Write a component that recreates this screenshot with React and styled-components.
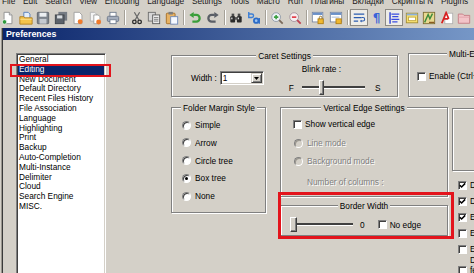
import React from "react";
import styled, { createGlobalStyle, css } from "styled-components";

//* Data *//
const menus = ["File", "Edit", "Search", "View", "Encoding", "Language", "Settings", "Tools", "Macro", "Run", "Плагины", "Вкладки", "Скрипты N", "Plugins"];

const pages = ["General", "Editing", "New Document", "Default Directory", "Recent Files History", "File Association", "Language", "Highlighting", "Print", "Backup", "Auto-Completion", "Multi-Instance", "Delimiter", "Cloud", "Search Engine", "MISC."];

const folderStyles = [
  { label: "Simple" },
  { label: "Arrow" },
  { label: "Circle tree" },
  { label: "Box tree", on: true },
  { label: "None" },
];

const sideChecks = [
  { label: "Display line number", on: true },
  { label: "Display bookmark", on: true },
  { label: "Enable current line highlighting", on: true },
  { label: "Enable smooth font" },
  { label: "Enable scrolling beyond last line" },
  { label: "Disable advanced scrolling feature (if you have touchpad problem)", tall: true },
];

//* Icons *//
const Svg = ({ children }) => (
  <svg width="14" height="14" viewBox="0 0 16 16">{children}</svg>
);

const icons = {
  new: (
    <Svg>
      <path d="M3.5 1.5h6l3 3v10h-9z" fill="#fff" stroke="#8c8c8c" />
      <path d="M9.5 1.5v3h3" fill="#e6e6e6" stroke="#8c8c8c" />
      <circle cx="4" cy="12.5" r="2.6" fill="#2f9a3c" stroke="#fff" strokeWidth=".8" />
    </Svg>
  ),
  open: (
    <Svg>
      <path d="M5.5 1.5h5l2 2v5h-7z" fill="#e4eefa" stroke="#4f79b8" />
      <path d="M1 6.5h4.5l1 1.3H15V15H1z" fill="#f3c34a" stroke="#b07e1e" />
      <path d="M1.5 9.5h13" stroke="#fbe08e" />
    </Svg>
  ),
  save: (
    <Svg>
      <rect x="1.5" y="1.5" width="13" height="13" rx="1" fill="#7c838c" stroke="#5a6068" />
      <rect x="4" y="2" width="8" height="4.5" fill="#eceff2" />
      <rect x="4" y="9" width="8" height="5.5" fill="#c4c9d0" />
    </Svg>
  ),
  saveAll: (
    <Svg>
      <rect x="5" y="1" width="10" height="10" fill="#767c84" />
      <rect x="1.5" y="4.5" width="10" height="10" fill="#5c626a" stroke="#3e4348" />
      <rect x="3.5" y="5" width="6" height="3.5" fill="#d8dce0" />
    </Svg>
  ),
  close: (
    <Svg>
      <path d="M3.5 1.5h6l3 3v10h-9z" fill="#fff" stroke="#9c9c9c" />
      <circle cx="10.5" cy="12.2" r="2.8" fill="#f07a2a" />
    </Svg>
  ),
  closeAll: (
    <Svg>
      <path d="M1.5 1.5h5l2 2v8h-7z" fill="#f4f4f4" stroke="#b0b0b0" />
      <path d="M5.5 4.5h5l2 2v8h-7z" fill="#fff" stroke="#9c9c9c" />
      <circle cx="11" cy="12.5" r="2.8" fill="#f07a2a" />
    </Svg>
  ),
  print: (
    <Svg>
      <rect x="4.5" y="1.5" width="7" height="5" fill="#fff" stroke="#6e7a8c" />
      <rect x="1.5" y="6" width="13" height="6" rx="1.5" fill="#a4adbc" stroke="#6a7688" />
      <rect x="4.5" y="10" width="7" height="4.5" fill="#fff" stroke="#6e7a8c" />
    </Svg>
  ),
  cut: (
    <Svg>
      <path d="M5 1.5l5 8.5M11 1.5L6 10" stroke="#666" strokeWidth="1.4" />
      <circle cx="5" cy="12.5" r="2" fill="none" stroke="#2c2c2c" strokeWidth="1.5" />
      <circle cx="11" cy="12.5" r="2" fill="none" stroke="#2c2c2c" strokeWidth="1.5" />
    </Svg>
  ),
  copy: (
    <Svg>
      <rect x="1.5" y="1.5" width="8" height="10" fill="#d6d6d6" stroke="#6a6a6a" />
      <rect x="6.5" y="4.5" width="8" height="10" fill="#ececec" stroke="#555" />
      <path d="M8 7.5h5M8 9.5h5M8 11.5h5" stroke="#777" />
    </Svg>
  ),
  paste: (
    <Svg>
      <rect x="1.5" y="2.5" width="10" height="12" rx="1" fill="#e7b264" stroke="#a46c22" />
      <rect x="4" y="1" width="5" height="3" fill="#7d7d7d" />
      <rect x="6.5" y="6.5" width="8" height="8.5" fill="#f4f8ff" stroke="#6a86b8" />
    </Svg>
  ),
  undo: (
    <Svg>
      <path d="M6 4.5h3.5a3.8 3.8 0 0 1 0 7.6H5" fill="none" stroke="#3a9e3a" strokeWidth="2.6" />
      <path d="M1.5 4.5L6.5 1v7z" fill="#3a9e3a" />
    </Svg>
  ),
  redo: (
    <Svg>
      <path d="M10 4.5H6.5a3.8 3.8 0 0 0 0 7.6H11" fill="none" stroke="#5a5e66" strokeWidth="2.6" />
      <path d="M14.5 4.5L9.5 1v7z" fill="#5a5e66" />
    </Svg>
  ),
  find: (
    <Svg>
      <rect x="3" y="3" width="3" height="4" fill="#4a4a4a" />
      <rect x="10" y="3" width="3" height="4" fill="#4a4a4a" />
      <rect x="1.5" y="6" width="5.5" height="7" rx="1" fill="#2a2a2a" />
      <rect x="9" y="6" width="5.5" height="7" rx="1" fill="#2a2a2a" />
      <rect x="6.5" y="7" width="3" height="3" fill="#555" />
      <rect x="2.5" y="7.5" width="1.5" height="2" fill="#ddd" />
      <rect x="10" y="7.5" width="1.5" height="2" fill="#ddd" />
    </Svg>
  ),
  replace: (
    <Svg>
      <path d="M2 1v6.5h3.5a2 2 0 0 0 0-4H2" fill="none" stroke="#3c7fd6" strokeWidth="1.6" />
      <circle cx="10.5" cy="11" r="3.6" fill="#2c6cc8" />
      <circle cx="10.5" cy="11" r="1.5" fill="#9cc4f2" />
      <path d="M14 8v6.5" stroke="#2c6cc8" strokeWidth="1.6" />
    </Svg>
  ),
  zoomIn: (
    <Svg>
      <circle cx="7" cy="7" r="5" fill="#eef2f6" stroke="#8a96a4" />
      <path d="M7 4.5v5M4.5 7h5" stroke="#3aa040" strokeWidth="1.8" />
      <path d="M10.5 10.5l4 4" stroke="#7a6a5a" strokeWidth="2" />
    </Svg>
  ),
  zoomOut: (
    <Svg>
      <circle cx="7" cy="7" r="5" fill="#f6eef0" stroke="#a0909a" />
      <path d="M4.5 7h5" stroke="#e0303c" strokeWidth="1.8" />
      <path d="M10.5 10.5l4 4" stroke="#c04050" strokeWidth="2" />
    </Svg>
  ),
  syncV: (
    <Svg>
      <rect x="1.5" y="1.5" width="12" height="11" fill="#fff" stroke="#7a86a0" />
      <rect x="2" y="2" width="11" height="2.5" fill="#6a90c8" />
      <rect x="8" y="9" width="6" height="5.5" fill="#f0b830" stroke="#b07c10" />
      <path d="M9.5 9V7.5a1.5 1.5 0 0 1 3 0V9" fill="none" stroke="#8a6a20" />
    </Svg>
  ),
  syncH: (
    <Svg>
      <rect x="1.5" y="1.5" width="13" height="11" fill="#fff" stroke="#7a86a0" />
      <rect x="2" y="2" width="12" height="2.5" fill="#6a90c8" />
      <path d="M3 7h9" stroke="#9ab0d0" />
      <rect x="8" y="9" width="6" height="5.5" fill="#f0b830" stroke="#b07c10" />
    </Svg>
  ),
  wrap: (
    <Svg>
      <path d="M2 3.5h12M2 7.5h9M2 11.5h5" stroke="#2a5cb0" strokeWidth="1.5" />
      <path d="M11 7.5h1.5a2 2 0 0 1 0 4H10" fill="none" stroke="#2a5cb0" strokeWidth="1.2" />
      <path d="M9 11.5l2-1.6v3.2z" fill="#2a5cb0" />
    </Svg>
  ),
  indent: (
    <Svg>
      <path d="M3.5 1.5v13" stroke="#2d3fd0" strokeWidth="1.6" />
      <path d="M5 3.5h9M6 6.5h7M5 9.5h9M6 12.5h6" stroke="#3a4ce0" strokeWidth="1.4" />
    </Svg>
  ),
  docMap: (
    <Svg>
      <rect x="1.5" y="2.5" width="13" height="11" fill="#f8e070" stroke="#a08a30" />
      <rect x="2" y="3" width="12" height="2" fill="#8ab0e0" />
      <rect x="4" y="7" width="8" height="4" fill="#fff" stroke="#c0a840" />
    </Svg>
  ),
  funcList: (
    <Svg>
      <rect x="1.5" y="1.5" width="13" height="13" fill="#e8d890" stroke="#7a6a30" />
      <path d="M3 13L7 4l2 5 3-6" fill="none" stroke="#3a8a3a" strokeWidth="1.6" />
      <path d="M8 13h6" stroke="#8a5a20" strokeWidth="1.4" />
    </Svg>
  ),
  macro: (
    <Svg>
      <rect x="5.5" y="2.5" width="9" height="12" fill="#fff" stroke="#b0b0b0" />
      <path d="M2 14L7 2l3 7M4.5 9h5" fill="none" stroke="#d82020" strokeWidth="2" />
    </Svg>
  ),
  folder: (
    <Svg>
      <path d="M1.5 3.5h5l1.5 1.5h6.5v9h-13z" fill="#f2c4c8" stroke="#c47880" />
      <path d="M1.5 7h13" stroke="#e0a0a8" />
    </Svg>
  ),
};

const tools = ["new", "open", "save", "saveAll", "close", "closeAll", "print", "|", "cut", "copy", "paste", "|", "undo", "redo", "|", "find", "replace", "|", "zoomIn", "zoomOut", "|", "syncV", "syncH", "|", "wrap", "para", "indent", "docMap", "funcList", "macro", "folder"];
const pressed = ["wrap", "indent"];

//* Small controls *//
const CheckBox = ({ on }) => (
  <Check>
    {on && (
      <svg width="7" height="7" viewBox="0 0 7 7">
        <path d="M0.8 3.2l1.8 1.8L6.2 1.4" fill="none" stroke="#000" strokeWidth="1.5" />
      </svg>
    )}
  </Check>
);

const App = () => {
  return (
    <Shell>
      <GlobalStyle />
      <MenuBar>
        <MenuRow>
          {menus.map((m) => (
            <MenuItem key={m}>{m}</MenuItem>
          ))}
        </MenuRow>
      </MenuBar>

      <Toolbar>
        {tools.map((t, i) =>
          t === "|" ? (
            <ToolSep key={i} />
          ) : (
            <ToolButton key={t} $pressed={pressed.includes(t)}>
              {t === "para" ? <Pilcrow>¶</Pilcrow> : icons[t]}
            </ToolButton>
          )
        )}
      </Toolbar>

      <Dialog>
        <TitleBar>Preferences</TitleBar>
        <DialogBody>
          <ListBox>
            {pages.map((p) => (
              <ListItem key={p} $selected={p === "Editing"}>
                {p}
              </ListItem>
            ))}
          </ListBox>

          <Panel>
            <Row>
              <GroupBox $w={227} $h={42} $top={2}>
                <Legend $center>Caret Settings</Legend>
                <CaretBody>
                  <WidthField>
                    <span>Width :</span>
                    <Combo>
                      <ComboValue>1</ComboValue>
                      <ComboButton>
                        <svg width="5" height="3" viewBox="0 0 5 3">
                          <path d="M0 0h5L2.5 3z" fill="#000" />
                        </svg>
                      </ComboButton>
                    </Combo>
                  </WidthField>
                  <BlinkBlock>
                    <BlinkLabel>Blink rate :</BlinkLabel>
                    <SliderRow>
                      <span>F</span>
                      <Slider>
                        <Thumb $pos={17} />
                      </Slider>
                      <span>S</span>
                    </SliderRow>
                  </BlinkBlock>
                </CaretBody>
              </GroupBox>

              <GroupBox $w={110} $h={44} $gap={10}>
                <Legend $indent={38}>Multi-Editing Settings</Legend>
                <OptionRow $top={12} $left={8}>
                  <CheckBox />
                  <span>Enable (Ctrl+Mouse click/selection)</span>
                </OptionRow>
              </GroupBox>
            </Row>

            <Row $top={10}>
              <GroupBox $w={95} $h={106}>
                <Legend $indent={9}>Folder Margin Style</Legend>
                <RadioList>
                  {folderStyles.map((s) => (
                    <OptionRow key={s.label} $left={0}>
                      <Radio $on={s.on} />
                      <span>{s.label}</span>
                    </OptionRow>
                  ))}
                </RadioList>
              </GroupBox>

              <EdgeColumn>
                <GroupBox $w={168} $h={90}>
                  <Legend $center>Vertical Edge Settings</Legend>
                  <EdgeBody>
                    <OptionRow $top={6}>
                      <CheckBox />
                      <span>Show vertical edge</span>
                    </OptionRow>
                    <OptionRow $top={9} $left={1}>
                      <Radio $disabled />
                      <Muted>Line mode</Muted>
                    </OptionRow>
                    <OptionRow $top={8} $left={1}>
                      <Radio $disabled />
                      <Muted>Background mode</Muted>
                    </OptionRow>
                    <OptionRow $top={11} $left={14}>
                      <Muted>Number of columns :</Muted>
                    </OptionRow>
                  </EdgeBody>
                </GroupBox>

                <GroupBox $w={168} $h={31}>
                  <Legend $center>Border Width</Legend>
                  <BorderRow>
                    <Slider>
                      <Thumb $pos={0} $wide />
                    </Slider>
                    <ValueText>0</ValueText>
                    <OptionRow $left={0}>
                      <CheckBox />
                      <span>No edge</span>
                    </OptionRow>
                  </BorderRow>
                </GroupBox>
              </EdgeColumn>

              <SideColumn>
                <GroupBox $w={100} $h={63} $top={1} />
                <SideChecks>
                  {sideChecks.map((c) => (
                    <SideRow key={c.label} $tall={c.tall}>
                      <CheckBox on={c.on} />
                      <span>{c.label}</span>
                    </SideRow>
                  ))}
                </SideChecks>
              </SideColumn>
            </Row>
          </Panel>

          <Annotation $x={7} $y={24} $w={101} $h={13} $b={2} />
          <Annotation $x={275} $y={152} $w={176} $h={47} $b={3} />
        </DialogBody>
      </Dialog>
    </Shell>
  );
};

export default App;

//* Styled Components *//

const GlobalStyle = createGlobalStyle`
  html, body {
    margin: 0;
    padding: 0;
    background: #d4d0c8;
    overflow: hidden;
  }
  body {
    font-family: "Liberation Sans", Arial, sans-serif;
    font-size: 8.3px;
    color: #000;
  }
`;

const Shell = styled.div`
  width: 474px;
  height: 273px;
  overflow: hidden;
  background: #d4d0c8;
`;

const MenuBar = styled.div`
  height: 8px;
  overflow: hidden;
`;

const MenuRow = styled.div`
  display: flex;
  margin: -4.5px 0 0 -2px;
  white-space: nowrap;
`;

const MenuItem = styled.span`
  padding: 0 3.9px;
  font-size: 8.3px;
  line-height: 11px;
  color: #1a1a1a;
`;

const Toolbar = styled.div`
  display: flex;
  align-items: center;
  height: 17px;
  margin: 1px 0 0 -0.75px;
`;

const ToolButton = styled.div`
  box-sizing: border-box;
  width: 17.5px;
  height: 17px;
  flex-shrink: 0;
  display: flex;
  align-items: center;
  justify-content: center;

  ${(p) =>
    p.$pressed &&
    css`
      border: 1px solid #8d8a84;
      background: #eeede8;
    `}
`;

const ToolSep = styled.div`
  width: 6px;
  height: 15px;
  flex-shrink: 0;
  display: flex;
  justify-content: center;

  &::before {
    content: "";
    width: 1px;
    background: #a5a198;
    box-shadow: 1px 0 0 #fff;
  }
`;

const Pilcrow = styled.span`
  font-family: "DejaVu Sans", sans-serif;
  font-size: 12px;
  font-weight: bold;
  line-height: 14px;
  color: #3a64d8;
`;

const Dialog = styled.div`
  margin: 2px 0 0 3px;
  box-shadow: -1px 0 0 #3a3a3a, -2px 0 0 #9a968e;
`;

const TitleBar = styled.div`
  height: 12px;
  padding-left: 3px;
  line-height: 12px;
  font-size: 8.8px;
  font-weight: bold;
  color: #fff;
  background: linear-gradient(90deg, #0a246a, #a6caf0);
  background-size: 680px 100%;
  background-repeat: no-repeat;
`;

const DialogBody = styled.div`
  position: relative;
  display: flex;
  align-items: flex-start;
  gap: 65px;
  padding: 13px 0 0 13px;
`;

const ListBox = styled.div`
  box-sizing: border-box;
  width: 90px;
  height: 240px;
  flex-shrink: 0;
  padding: 1px 1px 0 1px;
  background: #fff;
  border: 1px solid;
  border-color: #808080 #fff #fff #808080;
  box-shadow: inset 1px 1px 0 #404040, inset -1px -1px 0 #d4d0c8;
`;

const ListItem = styled.div`
  height: 9.8px;
  line-height: 9.8px;
  padding-left: 1px;
  white-space: nowrap;
  overflow: hidden;
  background: ${(p) => (p.$selected ? "#0a246a" : "transparent")};
  color: ${(p) => (p.$selected ? "#fff" : "#000")};
`;

const Panel = styled.div`
  display: flex;
  flex-direction: column;
`;

const Row = styled.div`
  display: flex;
  align-items: flex-start;
  margin-top: ${(p) => p.$top || 0}px;
`;

const GroupBox = styled.div`
  box-sizing: border-box;
  width: ${(p) => p.$w}px;
  height: ${(p) => p.$h}px;
  flex-shrink: 0;
  margin-top: ${(p) => p.$top || 0}px;
  margin-left: ${(p) => p.$gap || 0}px;
  border: 1px solid #808080;
  box-shadow: inset 1px 1px 0 #fff, 1px 1px 0 #fff;
`;

const Legend = styled.div`
  width: fit-content;
  margin-top: -5px;
  margin-left: ${(p) => (p.$center ? "auto" : `${p.$indent || 0}px`)};
  margin-right: ${(p) => (p.$center ? "auto" : "0")};
  padding: 0 2px;
  line-height: 10px;
  white-space: nowrap;
  background: #d4d0c8;
`;

const CaretBody = styled.div`
  display: flex;
  align-items: flex-start;
  padding-left: 19px;
`;

const WidthField = styled.div`
  display: flex;
  align-items: center;
  gap: 3px;
  margin-top: 10px;
`;

const Combo = styled.div`
  box-sizing: border-box;
  width: 44px;
  height: 14px;
  display: flex;
  align-items: stretch;
  background: #fff;
  border: 1px solid;
  border-color: #808080 #fff #fff #808080;
  box-shadow: inset 1px 1px 0 #404040, inset -1px -1px 0 #d4d0c8;
  padding: 1px 1px 1px 2px;
`;

const ComboValue = styled.span`
  flex: 1;
  line-height: 10px;
`;

const ComboButton = styled.div`
  box-sizing: border-box;
  width: 11px;
  display: flex;
  align-items: center;
  justify-content: center;
  background: #d4d0c8;
  border: 1px solid;
  border-color: #d4d0c8 #404040 #404040 #d4d0c8;
  box-shadow: inset 1px 1px 0 #fff, inset -1px -1px 0 #808080;
`;

const BlinkBlock = styled.div`
  display: flex;
  flex-direction: column;
  margin-left: 25px;
`;

const BlinkLabel = styled.span`
  margin-top: 3px;
  padding-left: 13px;
  line-height: 10px;
`;

const SliderRow = styled.div`
  display: flex;
  align-items: center;
  gap: 8px;
  height: 15px;
  margin-top: 6px;

  & > span:last-child {
    margin-left: 2px;
  }
`;

const Slider = styled.div`
  position: relative;
  width: 63px;
  height: 15px;
  flex-shrink: 0;

  &::before {
    content: "";
    position: absolute;
    left: 0;
    right: 0;
    top: 6px;
    height: 2px;
    background: #404040;
    border-bottom: 1px solid #fff;
  }
`;

const Thumb = styled.div`
  position: absolute;
  top: 0;
  left: ${(p) => p.$pos}px;
  box-sizing: border-box;
  width: ${(p) => (p.$wide ? 7 : 5)}px;
  height: 15px;
  background: #d4d0c8;
  border: 1px solid;
  border-color: #fff #404040 #404040 #fff;
  box-shadow: inset -1px -1px 0 #808080;
`;

const OptionRow = styled.div`
  display: flex;
  align-items: center;
  gap: ${(p) => (p.$gap ? p.$gap : 3)}px;
  height: 10px;
  margin-top: ${(p) => p.$top || 0}px;
  padding-left: ${(p) => (p.$left === undefined ? 0 : p.$left)}px;
  white-space: nowrap;
`;

const Check = styled.div`
  box-sizing: border-box;
  width: 9px;
  height: 9px;
  flex-shrink: 0;
  display: flex;
  align-items: center;
  justify-content: center;
  background: #fff;
  border: 1px solid;
  border-color: #808080 #fff #fff #808080;
  box-shadow: inset 1px 1px 0 #404040;
`;

const Radio = styled.div`
  position: relative;
  box-sizing: border-box;
  width: 9px;
  height: 9px;
  flex-shrink: 0;
  border-radius: 50%;
  background: ${(p) => (p.$disabled ? "#d4d0c8" : "#fff")};
  border: 1px solid;
  border-color: #808080 #fff #fff #808080;
  box-shadow: inset 1px 1px 0 ${(p) => (p.$disabled ? "#9a968e" : "#404040")};
  margin-right: 1px;

  ${(p) =>
    p.$on &&
    css`
      &::after {
        content: "";
        position: absolute;
        left: 2px;
        top: 2px;
        width: 3px;
        height: 3px;
        border-radius: 50%;
        background: #000;
      }
    `}
`;

const RadioList = styled.div`
  display: flex;
  flex-direction: column;
  gap: 7.75px;
  padding: 7px 0 0 10px;
`;

const EdgeColumn = styled.div`
  display: flex;
  flex-direction: column;
  gap: 8px;
  margin-left: 14px;
`;

const EdgeBody = styled.div`
  display: flex;
  flex-direction: column;
  padding-left: 12px;
`;

const Muted = styled.span`
  color: #808080;
  text-shadow: 1px 1px 0 #fff;
`;

const BorderRow = styled.div`
  display: flex;
  align-items: center;
  height: 15px;
  margin-top: 6px;
  padding-left: 9px;
`;

const ValueText = styled.span`
  margin: 0 13px 0 7px;
`;

const SideColumn = styled.div`
  display: flex;
  flex-direction: column;
  margin-left: 4px;
`;

const SideChecks = styled.div`
  display: flex;
  flex-direction: column;
  gap: 6px;
  margin-top: 9px;
  padding-left: 6px;
`;

const SideRow = styled.div`
  display: flex;
  align-items: center;
  gap: 3px;
  height: ${(p) => (p.$tall ? 20 : 10)}px;
  width: 120px;
  line-height: 10px;
  white-space: ${(p) => (p.$tall ? "normal" : "nowrap")};
`;

const Annotation = styled.div`
  position: absolute;
  left: ${(p) => p.$x}px;
  top: ${(p) => p.$y}px;
  box-sizing: border-box;
  width: ${(p) => p.$w}px;
  height: ${(p) => p.$h}px;
  border: ${(p) => p.$b}px solid #e3141c;
  pointer-events: none;
`;
